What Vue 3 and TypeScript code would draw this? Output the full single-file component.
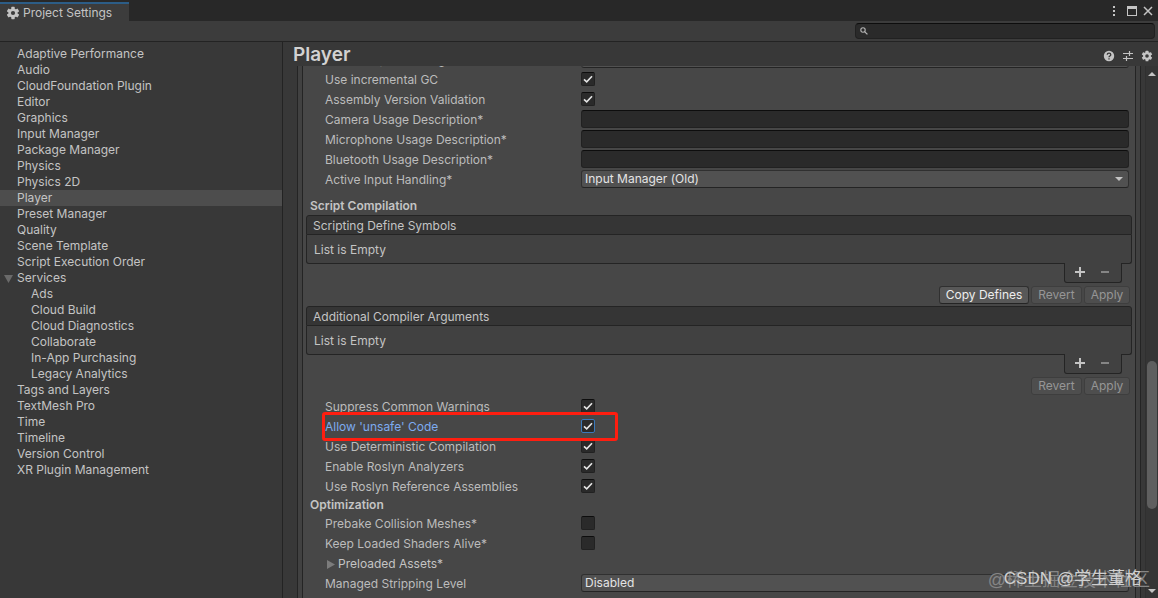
<script setup lang="ts">
import { ref } from 'vue'

interface Item { name: string; child?: boolean; open?: boolean }
interface Row {
  id: string
  label: string
  kind: 'check' | 'text' | 'select' | 'foldout'
  on?: boolean
  value?: string
  active?: boolean
}
interface ListBlock { title: string; copy: boolean }

const selected = ref('Player')

const names = (list: string[], child = false): Item[] => list.map((name) => ({ name, child }))

const items: Item[] = [
  ...names(['Adaptive Performance', 'Audio', 'CloudFoundation Plugin', 'Editor', 'Graphics', 'Input Manager',
    'Package Manager', 'Physics', 'Physics 2D', 'Player', 'Preset Manager', 'Quality', 'Scene Template',
    'Script Execution Order']),
  { name: 'Services', open: true },
  ...names(['Ads', 'Cloud Build', 'Cloud Diagnostics', 'Collaborate', 'In-App Purchasing', 'Legacy Analytics'], true),
  ...names(['Tags and Layers', 'TextMesh Pro', 'Time', 'Timeline', 'Version Control', 'XR Plugin Management']),
]

const configuration = ref<Row[]>([
  { id: 'gc', label: 'Use incremental GC', kind: 'check', on: true },
  { id: 'avv', label: 'Assembly Version Validation', kind: 'check', on: true },
  { id: 'cam', label: 'Camera Usage Description*', kind: 'text', value: '' },
  { id: 'mic', label: 'Microphone Usage Description*', kind: 'text', value: '' },
  { id: 'blue', label: 'Bluetooth Usage Description*', kind: 'text', value: '' },
  { id: 'input', label: 'Active Input Handling*', kind: 'select', value: 'Input Manager (Old)' },
])

const compilation = ref<Row[]>([
  { id: 'warn', label: 'Suppress Common Warnings', kind: 'check', on: true },
  { id: 'unsafe', label: "Allow 'unsafe' Code", kind: 'check', on: true, active: true },
  { id: 'det', label: 'Use Deterministic Compilation', kind: 'check', on: true },
  { id: 'ana', label: 'Enable Roslyn Analyzers', kind: 'check', on: true },
  { id: 'asm', label: 'Use Roslyn Reference Assemblies', kind: 'check', on: true },
])

const optimization = ref<Row[]>([
  { id: 'bake', label: 'Prebake Collision Meshes*', kind: 'check', on: false },
  { id: 'shader', label: 'Keep Loaded Shaders Alive*', kind: 'check', on: false },
  { id: 'assets', label: 'Preloaded Assets*', kind: 'foldout' },
  { id: 'strip', label: 'Managed Stripping Level', kind: 'select', value: 'Disabled' },
])

const lists: ListBlock[] = [
  { title: 'Scripting Define Symbols', copy: true },
  { title: 'Additional Compiler Arguments', copy: false },
]

const sections = [
  { id: 'config', title: '', lists: [] as ListBlock[], rows: configuration },
  { id: 'compile', title: 'Script Compilation', lists, rows: compilation },
  { id: 'optimize', title: 'Optimization', lists: [] as ListBlock[], rows: optimization },
]
</script>

<template>
  <div class="window">
    <header class="tabbar">
      <div class="tab">
        <svg class="gear" width="14" height="14" viewBox="0 0 14 14" aria-hidden="true">
          <g fill="currentColor">
            <rect v-for="a in [0, 60, 120]" :key="a" x="5.3" y="0.8" width="3.4" height="12.4" rx=".6" :transform="`rotate(${a} 7 7)`" />
          </g>
          <circle cx="7" cy="7" r="3.3" fill="none" stroke="currentColor" stroke-width="2.6" />
          <circle cx="7" cy="7" r="2.1" fill="#3c3c3c" />
        </svg>
        <span>Project Settings</span>
      </div>
      <div class="window-buttons">
        <button type="button" aria-label="Menu">
          <svg width="4" height="12" viewBox="0 0 4 12"><path d="M1 1h2v2H1zM1 5h2v2H1zM1 9h2v2H1z" fill="#c4c4c4" /></svg>
        </button>
        <button type="button" aria-label="Maximize">
          <svg width="10" height="10" viewBox="0 0 10 10"><path d="M0 0h10v10H0zM1 3v6h8V3z" fill="#c4c4c4" fill-rule="evenodd" /></svg>
        </button>
        <button type="button" aria-label="Close">
          <svg width="10" height="10" viewBox="0 0 10 10"><path d="M1 1l8 8M9 1l-8 8" stroke="#c4c4c4" stroke-width="1.5" /></svg>
        </button>
      </div>
    </header>

    <div class="toolbar">
      <label class="search">
        <svg width="8" height="8" viewBox="0 0 8 8" aria-hidden="true">
          <circle cx="3" cy="3" r="2.2" fill="none" stroke="#b4b4b4" stroke-width="1.1" />
          <path d="M4.6 4.6L7.4 7.4" stroke="#b4b4b4" stroke-width="1.3" />
        </svg>
        <input type="text" aria-label="Search settings" />
      </label>
    </div>

    <div class="body">
      <nav class="sidebar">
        <button
          v-for="item in items" :key="item.name" type="button" class="item"
          :class="{ child: item.child, selected: selected === item.name }" @click="selected = item.name"
        >
          <svg v-if="item.open" class="arrow" width="9" height="8" viewBox="0 0 9 8"><path d="M0 0h9L4.5 8z" fill="#6a6a6a" /></svg>
          {{ item.name }}
        </button>
      </nav>

      <main class="main">
        <div class="heading">
          <h1>Player</h1>
          <div class="tools">
            <button type="button" aria-label="Help">
              <svg width="12" height="12" viewBox="0 0 12 12">
                <circle cx="6" cy="6" r="5.2" fill="#c4c4c4" />
                <path d="M4.2 4.8C4.2 2.5 7.8 2.6 7.8 4.7C7.8 6 6 5.9 6 7.2M6 8.2v1.3" fill="none" stroke="#383838" stroke-width="1.3" />
              </svg>
            </button>
            <button type="button" aria-label="Presets">
              <svg width="12" height="12" viewBox="0 0 12 12">
                <path d="M1 3.5h6M7.5 1v5M8 3.5h3M1 8.5h3M4.5 6v5M5 8.5h6" fill="none" stroke="#c4c4c4" stroke-width="1.2" />
              </svg>
            </button>
            <button type="button" aria-label="Options">
              <svg width="12" height="12" viewBox="0 0 14 14">
                <g fill="#c4c4c4">
                  <rect v-for="a in [0, 60, 120]" :key="a" x="5.3" y="0.8" width="3.4" height="12.4" rx=".6" :transform="`rotate(${a} 7 7)`" />
                </g>
                <circle cx="7" cy="7" r="3.3" fill="none" stroke="#c4c4c4" stroke-width="2.6" />
                <circle cx="7" cy="7" r="2.1" fill="#383838" />
              </svg>
            </button>
          </div>
        </div>

        <div class="scroll">
          <div class="outer">
            <div class="panel">
              <div class="row scrolled">
                <label class="label" for="f-cpp">C++ Compiler Configuration</label>
                <div class="field select"><select id="f-cpp"><option></option></select></div>
              </div>
              <section v-for="s in sections" :key="s.id" class="section">
                <h2 v-if="s.title">{{ s.title }}</h2>
                <div v-for="l in s.lists" :key="l.title" class="list">
                  <div class="list-head">{{ l.title }}</div>
                  <div class="list-body">List is Empty</div>
                  <div class="list-foot">
                    <button type="button" aria-label="Add">
                      <svg width="10" height="10" viewBox="0 0 10 10"><path d="M4 0h2v4h4v2H6v4H4V6H0V4h4z" fill="#c4c4c4" /></svg>
                    </button>
                    <button type="button" aria-label="Remove" disabled>
                      <svg width="8" height="10" viewBox="0 0 8 10"><path d="M0 4h8v2H0z" fill="#858585" /></svg>
                    </button>
                  </div>
                  <div class="actions">
                    <button v-if="l.copy" type="button" class="btn copy">Copy Defines</button>
                    <button type="button" class="btn revert" disabled>Revert</button>
                    <button type="button" class="btn apply" disabled>Apply</button>
                  </div>
                </div>
                <div class="rows">
                  <div v-for="r in s.rows.value" :key="r.id" class="row" :class="{ active: r.active }">
                    <button v-if="r.kind === 'foldout'" type="button" class="label foldout">
                      <svg width="8" height="9" viewBox="0 0 8 9"><path d="M0 0v9l8-4.500z" fill="#7c7c7c" /></svg>
                      {{ r.label }}
                    </button>
                    <label v-else class="label" :for="`f-${r.id}`">{{ r.label }}</label>
                    <div v-if="r.kind === 'check'" class="field check">
                      <input :id="`f-${r.id}`" v-model="r.on" type="checkbox" />
                      <svg v-if="r.on" width="14" height="14" viewBox="0 0 14 14" aria-hidden="true">
                        <path d="M3 7.300L5.700 9.800L11 4.200" fill="none" stroke="#e4e4e4" stroke-width="1.6" />
                      </svg>
                    </div>
                    <div v-else-if="r.kind === 'text'" class="field">
                      <input :id="`f-${r.id}`" v-model="r.value" type="text" />
                    </div>
                    <div v-else-if="r.kind === 'select'" class="field select">
                      <select :id="`f-${r.id}`" v-model="r.value"><option>{{ r.value }}</option></select>
                      <svg width="8" height="4" viewBox="0 0 8 4" aria-hidden="true"><path d="M0 0h8L4 4z" fill="#c4c4c4" /></svg>
                    </div>
                    <span v-if="r.active" class="marker"></span>
                  </div>
                </div>
              </section>
            </div>
          </div>
          <div class="track">
            <svg width="8" height="4" viewBox="0 0 8 4"><path d="M4 0l4 4H0z" fill="#c4c4c4" /></svg>
            <div class="rail">
              <div class="thumb"></div>
            </div>
            <svg width="8" height="4" viewBox="0 0 8 4"><path d="M0 0h8L4 4z" fill="#c4c4c4" /></svg>
          </div>
        </div>
      </main>
    </div>

    <div class="watermark under">@稀土掘金技术社区</div>
    <div class="watermark over">CSDN @学生董格</div>
  </div>
</template>

<style>
body { margin: 0; background: #383838; }
</style>

<style scoped>
.window {
  position: relative;
  display: flex;
  flex-direction: column;
  height: 100vh;
  overflow: hidden;
  background: #383838;
  color: #c4c4c4;
  font: 12px/16px Inter, "Noto Sans", sans-serif;
}
* { box-sizing: border-box; }
button, input, select { font: inherit; color: inherit; margin: 0; padding: 0; border: 0; background: none; }
svg { display: block; flex: none; }

.tabbar {
  display: flex;
  justify-content: space-between;
  height: 21px;
  background: #282828;
}
.tab {
  display: flex;
  align-items: center;
  gap: 3px;
  width: 129px;
  margin-top: 2px;
  padding-left: 6px;
  border-top: 2px solid #2c5d87;
  background: #3c3c3c;
}
.window-buttons { display: flex; align-items: center; gap: 6px; padding-right: 5px; }
.window-buttons button:first-child { margin-right: 5px; }

.toolbar {
  display: flex;
  justify-content: flex-end;
  align-items: center;
  height: 21px;
  padding-right: 3px;
  background: #3c3c3c;
  border-bottom: 1px solid #232323;
}
.search {
  display: flex;
  align-items: center;
  width: 300px;
  height: 16px;
  padding-left: 4px;
  gap: 4px;
  border: 1px solid #212121;
  border-top-color: #0d0d0d;
  border-radius: 4px;
  background: #2a2a2a;
}
.search input { flex: 1; min-width: 0; outline: 0; }

.body { display: flex; flex: 1; min-height: 0; }
.sidebar {
  flex: none;
  display: flex;
  flex-direction: column;
  width: 283px;
  padding-top: 4px;
  border-right: 1px solid #232323;
}
.item { position: relative; height: 16px; padding-left: 17px; text-align: left; white-space: nowrap; }
.item.child { padding-left: 31px; }
.item.selected { background: #4d4d4d; }
.arrow { position: absolute; left: 4px; top: 5px; }

.main { display: flex; flex: 1; flex-direction: column; min-width: 0; }
.heading {
  display: flex;
  justify-content: space-between;
  align-items: center;
  flex: none;
  height: 24px;
  padding: 0 5px 0 10px;
}
h1 { margin: 0; padding-top: 2px; font-size: 19px; line-height: 24px; font-weight: 600; color: #d2d2d2; }
.tools { display: flex; gap: 7px; padding-top: 4px; }

.scroll { display: flex; flex: 1; min-height: 0; padding-left: 14px; overflow: hidden; }
.outer {
  flex: 1;
  min-width: 0;
  padding: 0 4px;
  border: solid #242424;
  border-width: 0 1px;
  background: #414141;
}
.panel {
  height: 100%;
  padding: 0 3px;
  overflow: hidden;
  border: solid #242424;
  border-width: 0 1px;
  background: #474747;
}
.track {
  display: flex;
  flex-direction: column;
  align-items: center;
  width: 13px;
  margin-left: 4px;
  padding: 6px 0 5px;
  border-left: 1px solid #303030;
  background: #353535;
}
.rail { display: flex; flex: 1; flex-direction: column; padding-top: 285px; }
.thumb { width: 10px; height: 148px; border-radius: 5px; background: #5f5f5f; }

.rows { display: flex; flex-direction: column; gap: 2px; }
.row { position: relative; display: flex; height: 18px; padding: 0 3px 0 19px; }
.row.scrolled { margin: -16px 0 2px; }
.label { flex: none; width: 256px; padding-top: 2px; text-align: left; white-space: nowrap; color: #bcbcbc; }
.foldout { display: flex; align-items: center; gap: 3px; padding-left: 2px; color: #c4c4c4; }
.field { position: relative; flex: 1; min-width: 0; }
.field input[type='text'] {
  display: block;
  width: 100%;
  height: 18px;
  padding: 0 3px;
  border: 1px solid #212121;
  border-top-color: #0d0d0d;
  border-radius: 3px;
  background: #2a2a2a;
}
.check { padding-top: 2px; }
.check input {
  appearance: none;
  display: block;
  width: 14px;
  height: 14px;
  border: 1px solid #212121;
  border-top-color: #0d0d0d;
  border-radius: 2px;
  background: #2a2a2a;
}
.check svg { position: absolute; left: 0; top: 2px; pointer-events: none; }
.select select {
  appearance: none;
  display: block;
  width: 100%;
  height: 18px;
  padding: 0 3px;
  border: 1px solid #303030;
  border-bottom-color: #242424;
  border-radius: 3px;
  background: #515151;
  color: #e4e4e4;
}
.select svg { position: absolute; right: 6px; top: 7px; pointer-events: none; }
.active .label { color: #7dabf0; }
.active .check input { border-color: #3a79bb; }
.marker {
  position: absolute;
  left: 16px;
  top: -5px;
  width: 296px;
  height: 29px;
  border: 3px solid #ff1e10;
  border-radius: 3px;
  pointer-events: none;
  z-index: 1;
}

h2 { margin: 0; padding: 1px 0 1px 4px; font-size: 12px; line-height: 16px; font-weight: 600; }
.section + .section { padding-top: 1px; }
.section:nth-of-type(2) { padding-top: 9px; }
.list { margin-bottom: 2px; }
.list-head {
  height: 20px;
  padding: 1px 6px;
  border: 1px solid #242424;
  border-radius: 3px 3px 0 0;
  background: #353535;
  line-height: 18px;
}
.list-body {
  height: 29px;
  padding: 0 7px;
  border: 1px solid #242424;
  border-top: 0;
  border-radius: 0 0 3px 3px;
  background: #414141;
  line-height: 29px;
}
.list-foot {
  position: relative;
  display: flex;
  align-items: center;
  gap: 16px;
  width: 58px;
  height: 20px;
  margin: -1px 10px 0 auto;
  padding: 0 0 2px 10px;
  border: 1px solid #242424;
  border-top: 0;
  border-radius: 0 0 3px 3px;
  background: #414141;
}
.actions { display: flex; justify-content: flex-end; gap: 2px; padding: 3px 2px 0 0; }
.btn {
  height: 18px;
  border: 1px solid #303030;
  border-bottom-color: #242424;
  border-radius: 3px;
  background: #585858;
  color: #eeeeee;
  line-height: 16px;
}
.btn:disabled { border-color: #3e3e3e; background: #4e4e4e; color: #969696; }
.copy { width: 90px; }
.revert { width: 51px; }
.apply { width: 46px; }

.watermark { position: absolute; white-space: nowrap; pointer-events: none; }
.under {
  right: 8px;
  bottom: 6px;
  font: 18px/24px "Liberation Sans", "Noto Sans CJK SC", sans-serif;
  color: #858585;
}
.over {
  right: 16px;
  bottom: 7px;
  font: 17px/24px "Liberation Sans", "Noto Sans CJK SC", sans-serif;
  color: #d0d0d0;
}
</style>
